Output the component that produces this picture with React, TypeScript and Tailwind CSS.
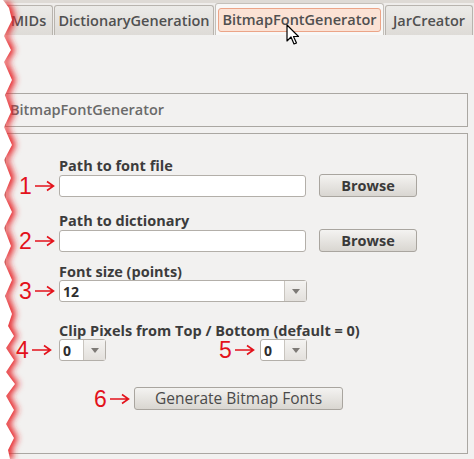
const font = { fontFamily: '"Open Sans", "DejaVu Sans", sans-serif' };

function Arrow({ n }: { n: string }) {
  return (
    <div className="flex h-[22px] items-center text-[#e3121b]" style={{ fontFamily: '"Liberation Sans", Arial, sans-serif' }}>
      <span className="text-[23px] leading-[22px]">{n}</span>
      <svg width="21" height="12" viewBox="0 0 21 12" className="ml-[2px]">
        <path d="M1 6 H19 M13 1.5 L19.5 6 L13 10.5" stroke="#e3121b" strokeWidth="1.6" fill="none" />
      </svg>
    </div>
  );
}

function Field({ w }: { w: string }) {
  return <div className={`h-[22px] rounded-[3px] border border-[#b3afa9] bg-white ${w}`} />;
}

function Button({ label, className }: { label: string; className?: string }) {
  return (
    <div
      className={`flex h-[23px] items-center justify-center rounded-[3px] border border-[#a9a59f] bg-gradient-to-b from-[#f4f3f1] to-[#d9d6d1] text-[#3a3a3a] ${className ?? ""}`}
    >
      {label}
    </div>
  );
}

function Combo({ value, w }: { value: string; w: string }) {
  return (
    <div className={`flex h-[22px] rounded-[3px] border border-[#b3afa9] bg-white ${w}`}>
      <div className="flex flex-1 items-center pl-[3px] text-[14px] font-bold text-[#2e2e2e]">{value}</div>
      <div className="flex w-[22px] items-center justify-center border-l border-[#c9c5bf] bg-gradient-to-b from-[#f4f3f1] to-[#e3e0dc]">
        <svg width="8" height="5" viewBox="0 0 8 5">
          <path d="M0 0 H8 L4 5 Z" fill="#7d7a76" />
        </svg>
      </div>
    </div>
  );
}

function Torn() {
  const pts = [
    [3, 0], [9, 8], [12, 20], [4, 36], [11, 50], [4, 62], [12, 80], [5, 95], [11, 112],
    [4, 127], [12, 145], [4, 160], [11, 178], [4, 195], [12, 212], [4, 228], [11, 246],
    [4, 262], [12, 280], [5, 296], [12, 314], [8, 326], [14, 336], [6, 348], [14, 360],
    [6, 372], [15, 384], [6, 396], [14, 410], [6, 424], [14, 438], [8, 450], [10, 459],
  ];
  const poly = "0,0 " + pts.map((p) => p.join(",")).join(" ") + " 0,459";
  return (
    <svg className="absolute left-0 top-0" width="30" height="459" viewBox="0 0 30 459">
      <defs>
        <filter id="blur" x="-50%" y="-5%" width="200%" height="110%">
          <feGaussianBlur stdDeviation="3" />
        </filter>
      </defs>
      <polygon points={poly} fill="#e8262c" filter="url(#blur)" transform="translate(4,0)" />
      <polygon points={poly} fill="#ffffff" />
    </svg>
  );
}

const tab =
  "flex h-[30px] items-center justify-center rounded-t-[3px] border border-b-0 border-[#b8b4ae] bg-gradient-to-b from-[#ecebe8] to-[#dedbd7] text-[14.5px] font-semibold text-[#505050]";
const label = "font-bold leading-[16px] text-[14.5px] text-[#3c3c3c]";

export default function App() {
  return (
    <div className="relative h-[459px] w-[474px] overflow-hidden bg-[#f2f1f0] text-[13px]" style={font}>
      {/* tabs */}
      <div className="flex h-[35px] items-end border-t-[3px] border-[#dedad5] bg-[#efedeb] pl-[4px]">
        <div className={`${tab} w-[49px]`}>MIDs</div>
        <div className={`${tab} ml-[1px] w-[160px]`}>DictionaryGeneration</div>
        <div className="ml-[1px] flex h-[32px] w-[169px] items-center justify-center rounded-t-[3px] border border-b-0 border-[#c4c0ba] bg-[#f8f7f6]">
          <div className="flex h-[24px] w-[163px] items-center justify-center rounded-[3px] border border-[#eba487] bg-[#fbe2d5] text-[14.5px] font-semibold text-[#505050]">
            BitmapFontGenerator
          </div>
        </div>
        <div className={`${tab} ml-[1px] w-[88px]`}>JarCreator</div>
      </div>

      <div className="ml-[5px] mr-[6px] mt-[58px]">
        <div className="flex h-[34px] items-center border border-[#aaa7a2] pl-[4px] text-[14.5px] font-semibold text-[#6a6a6a]">
          BitmapFontGenerator
        </div>

        <div className="mt-[6px] h-[321px] border border-[#aaa7a2] pt-[24px]">
          <div className="pl-[13px]">
            <div className="flex">
              <div className="w-[40px]" />
              <div className={label}>Path to font file</div>
            </div>
            <div className="flex items-center">
              <div className="w-[40px]"><Arrow n="1" /></div>
              <Field w="w-[247px]" />
              <Button label="Browse" className="ml-[13px] w-[98px] text-[14.5px] font-bold" />
            </div>

            <div className="mt-[16px] flex">
              <div className="w-[40px]" />
              <div className={label}>Path to dictionary</div>
            </div>
            <div className="flex items-center">
              <div className="w-[40px]"><Arrow n="2" /></div>
              <Field w="w-[247px]" />
              <Button label="Browse" className="ml-[13px] w-[98px] text-[14.5px] font-bold" />
            </div>

            <div className="mt-[12px] flex">
              <div className="w-[40px]" />
              <div className={label}>Font size (points)</div>
            </div>
            <div className="flex items-center">
              <div className="w-[40px]"><Arrow n="3" /></div>
              <Combo value="12" w="w-[248px]" />
            </div>

            <div className="mt-[21px] flex">
              <div className="w-[40px]" />
              <div className={label}>Clip Pixels from Top / Bottom (default = 0)</div>
            </div>
            <div className="flex items-center">
              <div className="-ml-[3px] w-[43px]"><Arrow n="4" /></div>
              <Combo value="0" w="w-[47px]" />
              <div className="ml-[113px] w-[41px]"><Arrow n="5" /></div>
              <Combo value="0" w="w-[47px]" />
            </div>

            <div className="mt-[26px] flex items-center">
              <div className="ml-[75px] w-[40px]"><Arrow n="6" /></div>
              <Button label="Generate Bitmap Fonts" className="w-[209px] text-[15.5px] text-[#4a4a4a]" />
            </div>
          </div>
        </div>
      </div>

      {/* cursor */}
      <svg className="absolute left-[286px] top-[24px]" width="14" height="22" viewBox="0 0 14 22">
        <path d="M1 1 L1 17 L5 13 L8 20 L10.5 19 L7.5 12.5 L12.5 12.5 Z" fill="#ffffff" stroke="#000000" strokeWidth="1.2" strokeLinejoin="round" />
      </svg>

      <Torn />
    </div>
  );
}
